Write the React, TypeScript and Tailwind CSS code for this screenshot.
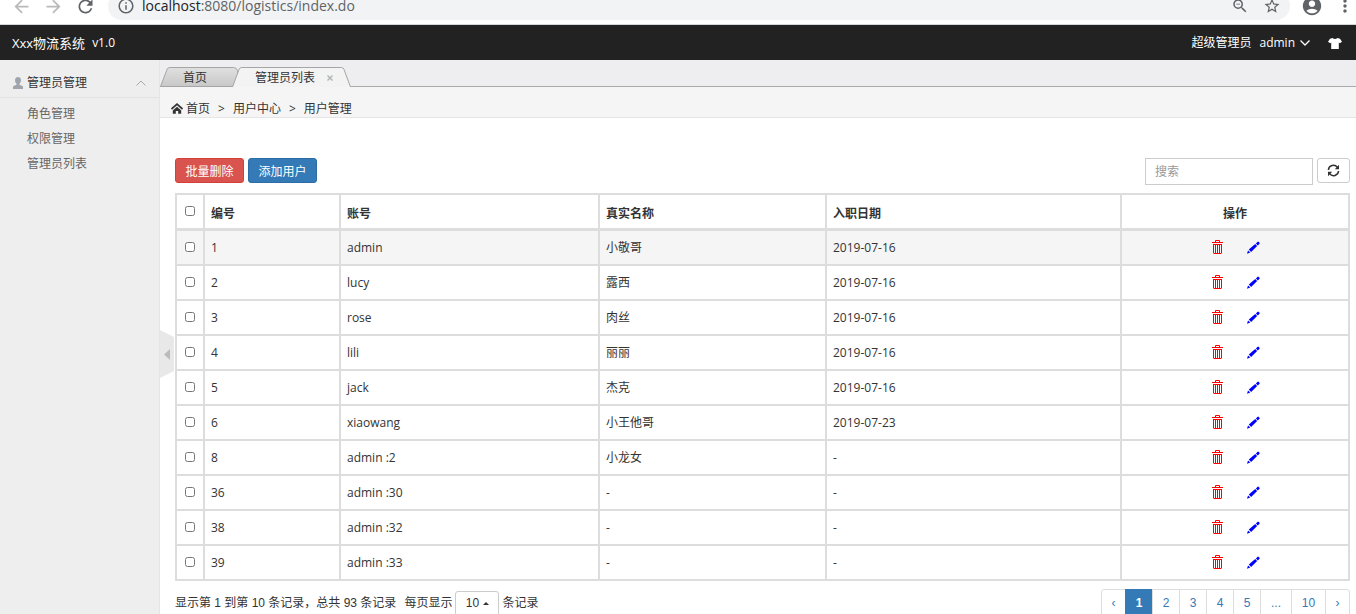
import { useState } from "react";
import {
  MdAccountCircle,
  MdArrowBack,
  MdArrowForward,
  MdInfoOutline,
  MdMoreVert,
  MdRefresh,
  MdStarBorder,
  MdZoomOut,
} from "react-icons/md";

type User = { id: number; account: string; name: string; date: string };

const users: User[] = [
  { id: 1, account: "admin", name: "小敬哥", date: "2019-07-16" },
  { id: 2, account: "lucy", name: "露西", date: "2019-07-16" },
  { id: 3, account: "rose", name: "肉丝", date: "2019-07-16" },
  { id: 4, account: "lili", name: "丽丽", date: "2019-07-16" },
  { id: 5, account: "jack", name: "杰克", date: "2019-07-16" },
  { id: 6, account: "xiaowang", name: "小王他哥", date: "2019-07-23" },
  { id: 8, account: "admin :2", name: "小龙女", date: "-" },
  { id: 36, account: "admin :30", name: "-", date: "-" },
  { id: 38, account: "admin :32", name: "-", date: "-" },
  { id: 39, account: "admin :33", name: "-", date: "-" },
];

const pages = [
  { label: "‹", width: "w-[25px]", rounded: "rounded-l-[3px]" },
  { label: "1", width: "w-7", rounded: "" },
  { label: "2", width: "w-7", rounded: "" },
  { label: "3", width: "w-7", rounded: "" },
  { label: "4", width: "w-7", rounded: "" },
  { label: "5", width: "w-7", rounded: "" },
  { label: "...", width: "w-8", rounded: "" },
  { label: "10", width: "w-[35px]", rounded: "" },
  { label: "›", width: "w-[25px]", rounded: "rounded-r-[3px]" },
];

function TrashIcon() {
  return (
    <svg width="11" height="14" viewBox="0 0 11 14" fill="none" stroke="#f00" strokeWidth="1" aria-hidden="true">
      <path d="M0 2.500h11M3.500 2.500v-2h4v2M1.500 4.500v8.500M9.500 4.500v8.500M1 4.500h9M1.500 13.500h8M3.500 5v8M5.500 5v8M7.500 5v8" />
    </svg>
  );
}

function PencilIcon() {
  return (
    <svg width="13" height="13" viewBox="0 0 13 13" fill="#00f" aria-hidden="true">
      <path d="M0 12.700l1-3.300 2.300 2.200zM1.800 8.600L8.200 3l1.900 2.100-6 5.900zM8.900 2.400L10.700.8q.4-.4.8 0l1 1q.4.4 0 .9l-1.700 1.800z" />
    </svg>
  );
}

function HomeIcon() {
  return (
    <svg width="12" height="11" viewBox="0 0 12 11" aria-hidden="true">
      <path d="M.5 6L6 1.200 11.500 6" fill="none" stroke="#333" strokeWidth="1.700" />
      <path d="M1.800 7.500L6 3.800 10.200 7.500v3.200H7.200V8H4.800v2.700h-3z" fill="#333" />
    </svg>
  );
}

function RefreshIcon() {
  return (
    <svg width="13" height="13" viewBox="0 0 13 13" fill="none" stroke="#333" strokeWidth="1.500" aria-hidden="true">
      <path d="M1.400 6A5 5 0 0 1 10.400 3.400M11.600 7A5 5 0 0 1 2.600 9.600" />
      <path d="M12 .8v4.400H7.800zM1 12.200V7.800h4.200z" fill="#333" stroke="none" />
    </svg>
  );
}

function BrowserBar() {
  return (
    <div className="h-[25px] overflow-hidden border-b border-[#d5d8db] bg-white">
      <div className="-mt-2 flex h-7 items-center text-[#5f6368]">
        <div className="flex w-[108px] shrink-0 items-center gap-[11px] pl-[11px]">
          <MdArrowBack size={21} color="#bababa" />
          <MdArrowForward size={21} color="#bababa" />
          <MdRefresh size={21} />
        </div>
        <div className="flex h-7 grow items-center rounded-full bg-[#f1f3f4] pr-[9px] pl-[9px]">
          <MdInfoOutline size={18} />
          <span className="grow pl-[7px] text-[14px] leading-3">
            <span className="text-[#202124]">localhost</span>:8080/logistics/index.do
          </span>
          <div className="flex gap-[14px]">
            <MdZoomOut size={18} />
            <MdStarBorder size={18} />
          </div>
        </div>
        <div className="flex items-center gap-3 pr-[1px] pl-[11px]">
          <MdAccountCircle size={22} />
          <MdMoreVert size={20} />
        </div>
      </div>
    </div>
  );
}

function TopBar() {
  return (
    <header className="flex h-[35px] items-center justify-between bg-[#222] pt-[2px] pr-[14px] pl-3 text-white">
      <div className="flex items-center gap-[7px]">
        <a href="#home" className="text-[13px]">Xxx物流系统</a>
        <span>v1.0</span>
      </div>
      <div className="flex items-center">
        <span className="pr-2">超级管理员</span>
        <button type="button" className="flex items-center gap-[5px]">
          admin
          <svg width="10" height="6" viewBox="0 0 10 6" fill="none" stroke="#fff" strokeWidth="1.300" aria-hidden="true">
            <path d="M.5.5L5 5 9.500.5" />
          </svg>
        </button>
        <button type="button" aria-label="换肤" className="pl-[18px]">
          <svg width="14" height="11" viewBox="0 0 14 11" fill="#fff" aria-hidden="true">
            <path d="M4.500 0Q7 2 9.500 0L12 .8 14 3.800 11.800 5.200 10.800 4.500V11H3.200V4.500L2.200 5.200 0 3.800 2 .8z" />
          </svg>
        </button>
      </div>
    </header>
  );
}

function Sidebar() {
  return (
    <aside className="w-40 shrink-0 border-r border-[#e5e5e5] bg-[#eee]">
      <button
        type="button"
        className="flex h-[38px] w-full items-center gap-1 border-b border-[#e2e2e2] pt-[9px] pr-[13px] pl-[13px] text-[#333]"
      >
        <svg width="10" height="12" viewBox="0 0 10 12" fill="#a0a5ad" aria-hidden="true">
          <path d="M5 0c2 0 3 1.300 3 3.200 0 1.500-.6 2.800-1.500 3.500v1L9.500 9q.5.300.5 1v2H0v-2q0-.7.5-1l3-1.300v-1C2.600 6 2 4.700 2 3.200 2 1.300 3 0 5 0z" />
        </svg>
        <span className="grow text-left">管理员管理</span>
        <svg width="10" height="6" viewBox="0 0 10 6" fill="none" stroke="#aaa" aria-hidden="true">
          <path d="M.5 5.500L5 1l4.500 4.500" />
        </svg>
      </button>
      <nav className="flex flex-col pt-[3px] pl-[27px] leading-[25px] text-[#666]">
        <a href="#roles">角色管理</a>
        <a href="#permissions">权限管理</a>
        <a href="#admins">管理员列表</a>
      </nav>
    </aside>
  );
}

function Tabs() {
  return (
    <div className="flex h-[27px] items-end border-b border-[#aaa] bg-[#eeeef0] text-[#333]">
      <div className="relative -mb-px flex h-5 w-[72px] items-center pt-[2px] pl-[23px]">
        <svg className="absolute top-0 left-0" width="80" height="20" viewBox="0 0 80 20" aria-hidden="true">
          <defs>
            <linearGradient id="tab" x1="0" y1="0" x2="0" y2="1">
              <stop offset="0" stopColor="#e0e0e0" />
              <stop offset="1" stopColor="#c8c8c8" />
            </linearGradient>
          </defs>
          <path d="M.5 19.500L7 2.500q.8-2 2.500-2h64q3 0 4 3l2 16z" fill="url(#tab)" stroke="#a5a5a5" />
        </svg>
        <a href="#home" className="relative">首页</a>
      </div>
      <div className="relative -mb-px flex h-5 w-[119px] items-center justify-between pt-[2px] pr-[18px] pl-[23px]">
        <svg className="absolute top-0 left-0" width="119" height="20" viewBox="0 0 119 20" aria-hidden="true">
          <path d="M.5 20L7 2.500q.8-2 2.500-2h100q1.700 0 2.500 2L118.500 20z" fill="#f3f3f3" />
          <path d="M.5 20L7 2.500q.8-2 2.500-2h100q1.700 0 2.500 2L118.500 20" fill="none" stroke="#a5a5a5" />
        </svg>
        <a href="#admins" className="relative">管理员列表</a>
        <button type="button" aria-label="关闭" className="relative">
          <svg width="6" height="6" viewBox="0 0 6 6" stroke="#b0b5b8" strokeWidth="1.500" aria-hidden="true">
            <path d="M.5.5l5 5M5.500.5l-5 5" />
          </svg>
        </button>
      </div>
    </div>
  );
}

export default function App() {
  const [selected, setSelected] = useState<number[]>([]);
  const all = selected.length === users.length;
  const toggle = (id: number) =>
    setSelected((ids) => (ids.includes(id) ? ids.filter((i) => i !== id) : [...ids, id]));

  return (
    <div className="flex h-screen flex-col overflow-hidden bg-white font-['Open_Sans','Noto_Sans_CJK_SC',sans-serif] text-[12px] leading-[18px] text-[#333]">
      <BrowserBar />
      <TopBar />
      <div className="flex min-h-0 grow">
        <Sidebar />
        <main className="relative min-w-0 grow">
          <Tabs />
          <nav className="flex h-[31px] items-center gap-2 border-b border-[#e5e5e5] bg-[#f5f5f5] pt-[14px] pl-[11px]">
            <a href="#home" className="flex items-center gap-[3px]">
              <HomeIcon />
              首页
            </a>
            <span>&gt;</span>
            <span>用户中心</span>
            <span>&gt;</span>
            <span>用户管理</span>
          </nav>

          <button type="button" aria-label="收起菜单" className="absolute top-[270px] left-0">
            <svg width="14" height="48" viewBox="0 0 14 48" aria-hidden="true">
              <path d="M0 0l14 7v34L0 48z" fill="#e8e8e8" />
              <path d="M10 19v11l-6-5.500z" fill="#bbb" />
            </svg>
          </button>

          <div className="pt-10 pr-[6px] pl-[15px]">
            <div className="flex items-start justify-between pb-2">
              <div className="flex gap-1">
                <button type="button" className="h-[25px] w-[69px] rounded-[3px] border border-[#d43f3a] bg-[#d9534f] pt-[3px] text-white">
                  批量删除
                </button>
                <button type="button" className="h-[25px] w-[69px] rounded-[3px] border border-[#2e6da4] bg-[#337ab7] pt-[3px] text-white">
                  添加用户
                </button>
              </div>
              <div className="flex items-start gap-1">
                <input
                  type="text"
                  aria-label="搜索"
                  placeholder="搜索"
                  className="h-[27px] w-[168px] border border-[#ccc] px-[9px] placeholder:text-[#999]"
                />
                <button
                  type="button"
                  aria-label="刷新"
                  className="flex h-[25px] w-[33px] items-center justify-center rounded-[3px] border border-[#ccc]"
                >
                  <RefreshIcon />
                </button>
              </div>
            </div>

            <table className="w-full table-fixed border-collapse border-2 border-[#ddd]">
              <colgroup>
                <col className="w-[28px]" />
                <col className="w-[136px]" />
                <col className="w-[259px]" />
                <col className="w-[227px]" />
                <col className="w-[295px]" />
                <col />
              </colgroup>
              <thead>
                <tr className="h-[36px] text-left">
                  <th className="border-2 border-b-3 border-[#ddd]">
                    <input
                      type="checkbox"
                      aria-label="全选"
                      className="mx-auto block size-[10px]"
                      checked={all}
                      onChange={() => setSelected(all ? [] : users.map((u) => u.id))}
                    />
                  </th>
                  <th className="border-2 border-b-3 border-[#ddd] px-[6px] pt-[5px]">编号</th>
                  <th className="border-2 border-b-3 border-[#ddd] px-[6px] pt-[5px]">账号</th>
                  <th className="border-2 border-b-3 border-[#ddd] px-[6px] pt-[5px]">真实名称</th>
                  <th className="border-2 border-b-3 border-[#ddd] px-[6px] pt-[5px]">入职日期</th>
                  <th className="border-2 border-b-3 border-[#ddd] px-[6px] pt-[5px] text-center">操作</th>
                </tr>
              </thead>
              <tbody>
                {users.map((user) => (
                  <tr key={user.id} className="h-[35px] first:bg-[#f5f5f5]">
                    <td className="border-2 border-[#ddd]">
                      <input
                        type="checkbox"
                        aria-label={user.account}
                        className="mx-auto block size-[10px]"
                        checked={selected.includes(user.id)}
                        onChange={() => toggle(user.id)}
                      />
                    </td>
                    <td className="border-2 border-[#ddd] px-[6px] pt-[2px]">{user.id}</td>
                    <td className="border-2 border-[#ddd] px-[6px] pt-[2px]">{user.account}</td>
                    <td className="border-2 border-[#ddd] px-[6px] pt-[2px]">{user.name}</td>
                    <td className="border-2 border-[#ddd] px-[6px] pt-[2px]">{user.date}</td>
                    <td className="border-2 border-[#ddd]">
                      <div className="flex items-center justify-center gap-6 pl-[2px]">
                        <button type="button" aria-label="删除"><TrashIcon /></button>
                        <button type="button" aria-label="编辑"><PencilIcon /></button>
                      </div>
                    </td>
                  </tr>
                ))}
              </tbody>
            </table>

            <div className="flex items-start justify-between pt-2 font-['Liberation_Sans','Noto_Sans_CJK_SC',sans-serif]">
              <div className="flex items-center pt-[2px]">
                <span className="pr-2">显示第 1 到第 10 条记录，总共 93 条记录</span>
                <span>每页显示</span>
                <button type="button" className="mx-[3px] flex h-[25px] w-11 items-center justify-center gap-1 rounded-[3px] border border-[#ccc]">
                  10
                  <svg width="6" height="3" viewBox="0 0 6 3" fill="#333" aria-hidden="true">
                    <path d="M0 3l3-3 3 3z" />
                  </svg>
                </button>
                <span>条记录</span>
              </div>
              <ul className="flex">
                {pages.map((page) => (
                  <li key={page.label} className="not-first:-ml-px">
                    <a
                      href="#page"
                      className={`flex h-7 items-center justify-center border ${page.width} ${page.rounded} ${
                        page.label === "1"
                          ? "border-[#337ab7] bg-[#337ab7] font-bold text-white"
                          : "border-[#ddd] text-[#337ab7]"
                      }`}
                    >
                      {page.label}
                    </a>
                  </li>
                ))}
              </ul>
            </div>
          </div>
        </main>
      </div>
    </div>
  );
}
